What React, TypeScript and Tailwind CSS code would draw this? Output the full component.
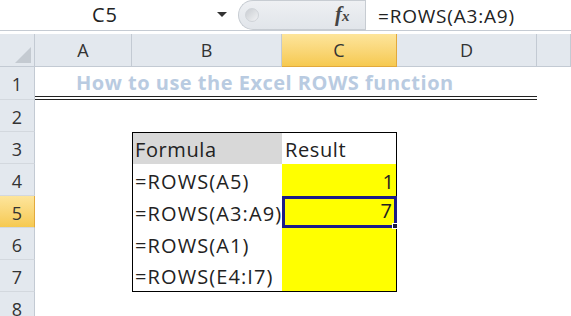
const hdr = "bg-[#e3e8ee] border-r border-b border-[#c3cad3] text-[#333] flex items-center justify-center";
const sel = "bg-gradient-to-b from-[#fde59b] to-[#f6c94f] border-r border-b border-[#e2a93c] text-[#333] flex items-center justify-center";

const rows = [
  { n: 1, h: "h-[33px]" },
  { n: 2, h: "h-[32px]" },
  { n: 3, h: "h-[32px]" },
  { n: 4, h: "h-[32px]" },
  { n: 5, h: "h-[32px]" },
  { n: 6, h: "h-[32px]" },
  { n: 7, h: "h-[32px]" },
  { n: 8, h: "h-[32px]" },
];

const formulas: Record<number, string> = {
  4: "=ROWS(A5)",
  5: "=ROWS(A3:A9)",
  6: "=ROWS(A1)",
  7: "=ROWS(E4:I7)",
};
const results: Record<number, string> = { 4: "1", 5: "7" };

function Row({ n, h }: { n: number; h: string }) {
  const inTable = n >= 3 && n <= 7;
  const title = n === 1;
  const line = title ? "border-b-[4px] border-double border-[#222]" : "";

  let bCls = "w-[150px] shrink-0";
  let cCls = "w-[115px] shrink-0";
  if (inTable) {
    bCls += " border-l border-black";
    cCls += " border-r border-black";
    if (n === 3) {
      bCls += " border-t bg-[#d8d8d8]";
      cCls += " border-t";
    }
    if (n === 7) {
      bCls += " border-b";
      cCls += " border-b";
    }
    if (n >= 4) cCls += " bg-[#ffff00]";
  }
  if (n === 5) cCls = "w-[115px] shrink-0 bg-[#ffff00] border-[3px] border-[#1c1c86] relative";

  return (
    <div className={`flex ${h}`}>
      <div className={`w-[35px] shrink-0 ${n === 5 ? sel : hdr} border-b-[#d3d8de] pt-[2px] text-[18px] tracking-normal`}>{n}</div>
      <div className={`w-[97px] shrink-0 ${line} relative`}>
        {title && (
          <span className="absolute left-[41px] top-[2px] whitespace-nowrap font-bold text-[#b9cbe1] text-[20px] tracking-[0.5px]">
            How to use the Excel ROWS function
          </span>
        )}
      </div>
      <div className={`${bCls} ${line} flex items-end pl-[2px] whitespace-nowrap relative z-10`}>
        {n === 3 ? <span className="tracking-[0.6px]">Formula</span> : formulas[n] ?? ""}
      </div>
      <div className={`${cCls} ${line} flex items-end justify-end pr-[1px] ${n === 3 ? "justify-start pl-[3px]" : ""}`}>
        {n === 3 ? <span className="tracking-[0.6px]">Result</span> : results[n] ?? ""}
        {n === 5 && (
          <span className="absolute -right-[4px] -bottom-[4px] w-[6px] h-[6px] bg-[#1c1c3a] border border-white" />
        )}
      </div>
      <div className={`w-[140px] shrink-0 ${line}`} />
      <div className="flex-1" />
    </div>
  );
}

export default function App() {
  return (
    <div className="w-[571px] h-[316px] overflow-hidden bg-white font-['Open_Sans','Liberation_Sans',sans-serif] text-[20px] leading-[28px] text-[#222] tracking-[1.1px]">
      {/* formula bar */}
      <div className="flex h-[31px] border-b border-[#c5cbd3]">
        <div className="w-[238px] shrink-0 relative flex items-center">
          <span className="absolute left-[92px] top-[1px] text-[#222] tracking-[1px]">C5</span>
          <span className="absolute left-[217px] top-[12px] w-0 h-0 border-l-[5px] border-r-[5px] border-t-[5px] border-l-transparent border-r-transparent border-t-[#333]" />
        </div>
        <div className="w-[127px] shrink-0 bg-gradient-to-b from-[#eef0f3] to-[#e1e5ea] rounded-l-[16px] border border-r-0 border-[#c7ccd2] relative flex items-center">
          <span className="ml-[6px] w-[14px] h-[14px] rounded-full bg-gradient-to-br from-[#c9cdd2] to-[#f2f3f5] border border-[#d0d4d9]" />
          <span className="absolute left-[96px] top-[-1px] italic font-['Liberation_Serif',serif] font-bold text-[21px] text-[#444] tracking-normal">
            f<span className="text-[15px]">x</span>
          </span>
        </div>
        <div className="flex-1 border-l border-[#c7ccd2] pl-[12px] flex items-center pt-[1px] text-[19px] tracking-[0.8px]">=ROWS(A3:A9)</div>
      </div>
      <div className="h-[3px]" />
      {/* column headers */}
      <div className="flex h-[33px] text-[18px] tracking-normal">
        <div className={`w-[35px] shrink-0 ${hdr} relative`}>
          <svg className="absolute right-[3px] bottom-[3px]" width="16" height="16" viewBox="0 0 16 16">
            <polygon points="16,0 16,16 0,16" fill="#c4cad1" />
          </svg>
        </div>
        <div className={`w-[97px] shrink-0 ${hdr}`}>A</div>
        <div className={`w-[150px] shrink-0 ${hdr}`}>B</div>
        <div className={`w-[115px] shrink-0 ${sel}`}>C</div>
        <div className={`w-[140px] shrink-0 ${hdr}`}>D</div>
        <div className={`flex-1 ${hdr}`} />
      </div>
      {rows.map((r) => (
        <Row key={r.n} n={r.n} h={r.h} />
      ))}
    </div>
  );
}
